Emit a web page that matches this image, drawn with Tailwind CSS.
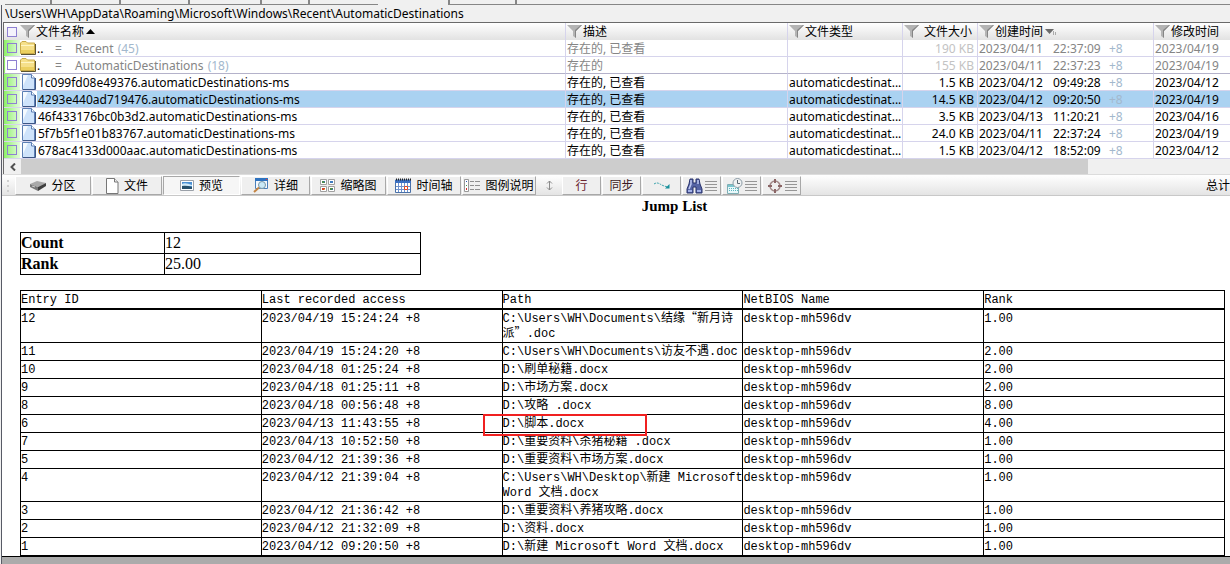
<!DOCTYPE html>
<html lang="zh-CN">
<head>
<meta charset="utf-8">
<title>AutomaticDestinations</title>
<script src="https://cdn.jsdelivr.net/npm/@tailwindcss/browser@4"></script>
</head>
<body class="min-h-screen flex flex-col overflow-hidden bg-[#f0f0f0] text-black text-[12px] font-['Noto_Sans','Noto_Sans_CJK_SC',sans-serif]">
<svg class="hidden">
  <symbol id="funnel" viewBox="0 0 15 13"><path d="M0 0h15L9 6v7l-3-2V6z" fill="#b4b4b4"/><path d="M8 5l6-5h1L9 6v7l-1-1z" fill="#858585"/></symbol>
  <symbol id="folder" viewBox="0 0 16 14"><path d="M.5 12.500V2L2 .5h4L7.500 2H14.500v10.500z" fill="#f6e08a" stroke="#c9aa48"/><path d="M1 4.500h13" stroke="#fff6c4"/><path d="M1 9h13v3H1z" fill="#ecd060"/><path d="M1 13.500h14.500V3" stroke="#5c5433" fill="none"/></symbol>
  <symbol id="doc" viewBox="0 0 14 16"><path d="M.5.5h9l3 3.500v11.500H.5z" fill="#cfe3fb" stroke="#5d7fb5"/><path d="M1 1h5L1 12z" fill="#f5faff"/><path d="M9.500.5V4h3" fill="#fff" stroke="#5d7fb5"/><path d="M13.500 4v11.500H1" stroke="#3d5584" fill="none"/></symbol>
</svg>

<nav class="flex h-[5px] shrink-0 pl-[5px]">
  <div class="w-[47px] border-r-2 border-b border-[#868686]"></div>
  <div class="w-[69px] border-r-2 border-b border-[#868686]"></div>
  <div class="w-[69px] border-r-2 border-b border-[#868686]"></div>
  <div class="w-[72px] border-r-2 border-b border-[#868686]"></div>
  <div class="w-[48px] border-r-2 border-b border-[#868686]"></div>
  <div class="w-[68px] border-b border-[#868686]"></div>
  <div class="w-[72px] border-r-2 border-[#868686]"></div>
  <div class="w-[67px] border-r-2 border-b border-[#868686]"></div>
  <div class="flex-1 border-b border-[#868686]"></div>
</nav>

<main class="ml-px border-l border-[#585b66]">
  <div class="h-[17px] pl-[3px] leading-[18px] text-[12px] whitespace-nowrap">\Users\WH\AppData\Roaming\Microsoft\Windows\Recent\AutomaticDestinations</div>

  <section class="ml-px border-l border-t border-[#6a6a6a] overflow-hidden">
    <table class="w-full table-fixed border-separate border-spacing-0 bg-white whitespace-nowrap leading-4 [&_td]:h-[17px] [&_td]:p-0 [&_td]:pt-[2px] [&_td]:leading-[14px] [&_td:first-child]:pt-0 [&_td:nth-child(2)]:pt-0 [&_td:nth-child(2)_div>span]:pt-[2px] [&_td]:overflow-hidden [&_td]:border-b [&_td]:border-[#d6d4ec] [&_td+td+td]:border-l [&_td+td+td]:pl-px [&_th]:h-[17px] [&_th]:p-0 [&_th]:font-normal [&_th]:text-left [&_th]:overflow-hidden">
      <colgroup><col class="w-[16px]"><col class="w-[545px]"><col class="w-[222px]"><col class="w-[115px]"><col class="w-[75px]"><col class="w-[176px]"><col></colgroup>
      <thead class="bg-linear-to-b from-white to-[#e2e2e2] [&_th+th+th]:border-l [&_th+th+th]:border-[#d6d4ec]">
        <tr>
          <th><input type="checkbox" aria-label="全选" class="block ml-[3px] appearance-none size-[10px] border border-[#8f80d2] bg-[#f4f2fc]"></th>
          <th><div class="flex items-center"><svg class="w-[15px] h-[13px] mr-px"><use href="#funnel"/></svg>文件名称<svg class="ml-[2px] w-[9px] h-[5px]" viewBox="0 0 9 5"><path d="M4.500 0L9 5H0z"/></svg></div></th>
          <th><div class="flex items-center gap-px pl-px"><svg class="w-[15px] h-[13px]"><use href="#funnel"/></svg>描述</div></th>
          <th><div class="flex items-center gap-px pl-px"><svg class="w-[15px] h-[13px]"><use href="#funnel"/></svg>文件类型</div></th>
          <th><div class="flex items-center justify-between pl-px pr-[5px]"><svg class="w-[15px] h-[13px]"><use href="#funnel"/></svg>文件大小</div></th>
          <th><div class="flex items-center gap-px pl-px"><svg class="w-[15px] h-[13px]"><use href="#funnel"/></svg>创建时间<svg class="ml-px w-[11px] h-[7px]" viewBox="0 0 11 7"><path d="M0 1h9L4.500 6z" fill="#6b6b6b"/><path d="M8.500 3v4M10.500 4v3" stroke="#aaa"/></svg></div></th>
          <th><div class="flex items-center gap-px pl-px"><svg class="w-[15px] h-[13px]"><use href="#funnel"/></svg>修改时间</div></th>
        </tr>
      </thead>
      <tbody>
        <tr class="text-[#858585]">
          <td class="bg-linear-to-r from-[#8cf066] to-[#e4fbdc]"><input type="checkbox" aria-label="Recent" class="block ml-[3px] appearance-none size-[10px] border border-[#8f80d2]"></td>
          <td><div class="flex items-center"><svg class="w-4 h-[14px] mr-px"><use href="#folder"/></svg><span class="w-[18px] text-black">..</span><span class="w-5">=</span><span>Recent <span class="ml-px text-[#a3b8cd]">(45)</span></span></div></td>
          <td>存在的, 已查看</td><td></td>
          <td class="text-right pr-[3px]! text-[#c3c3c3]">190 KB</td>
          <td><div class="flex"><span class="w-[74px]">2023/04/11</span><span class="w-14">22:37:09</span><span class="text-[#a3b8cd]">+8</span></div></td><td>2023/04/19</td>
        </tr>
        <tr class="text-[#858585] [&>td]:border-b-[#b4b2ca]!">
          <td class="bg-linear-to-r from-[#8cf066] from-5% to-white to-10%"><input type="checkbox" aria-label="AutomaticDestinations" class="block ml-[3px] appearance-none size-[10px] border border-[#8f80d2]"></td>
          <td><div class="flex items-center"><svg class="w-4 h-[14px] mr-px"><use href="#folder"/></svg><span class="w-[18px] text-black">.</span><span class="w-5">=</span><span>AutomaticDestinations <span class="ml-px text-[#a3b8cd]">(18)</span></span></div></td>
          <td>存在的</td><td></td>
          <td class="text-right pr-[3px]! text-[#c3c3c3]">155 KB</td>
          <td><div class="flex"><span class="w-[74px]">2023/04/11</span><span class="w-14">22:37:23</span><span class="text-[#a3b8cd]">+8</span></div></td><td>2023/04/19</td>
        </tr>
        <tr>
          <td class="bg-linear-to-r from-[#8cf066] to-[#e4fbdc]"><input type="checkbox" aria-label="1c099fd08e49376" class="block ml-[3px] appearance-none size-[10px] border border-[#8f80d2]"></td>
          <td><div class="flex items-center"><svg class="w-[14px] h-4 ml-[2px] mr-px"><use href="#doc"/></svg><span class="pl-px">1c099fd08e49376.automaticDestinations-ms</span></div></td>
          <td>存在的, 已查看</td><td>automaticdestinat...</td>
          <td class="text-right pr-[3px]!">1.5 KB</td>
          <td><div class="flex"><span class="w-[74px]">2023/04/12</span><span class="w-14">09:49:28</span><span class="text-[#a3b8cd]">+8</span></div></td><td>2023/04/12</td>
        </tr>
        <tr class="[&>td+td+td]:bg-[#aad2f1]">
          <td class="bg-linear-to-r from-[#8cf066] to-[#e4fbdc]"><input type="checkbox" aria-label="4293e440ad719476" class="block ml-[3px] appearance-none size-[10px] border border-[#8f80d2]"></td>
          <td><div class="flex items-center"><svg class="w-[14px] h-4 ml-[2px] mr-px"><use href="#doc"/></svg><span class="flex-1 bg-[#aad2f1] pl-px">4293e440ad719476.automaticDestinations-ms</span></div></td>
          <td>存在的, 已查看</td><td>automaticdestinat...</td>
          <td class="text-right pr-[3px]!">14.5 KB</td>
          <td><div class="flex"><span class="w-[74px]">2023/04/12</span><span class="w-14">09:20:50</span><span class="text-[#a3b8cd]">+8</span></div></td><td>2023/04/19</td>
        </tr>
        <tr>
          <td class="bg-linear-to-r from-[#8cf066] to-[#e4fbdc]"><input type="checkbox" aria-label="46f433176bc0b3d2" class="block ml-[3px] appearance-none size-[10px] border border-[#8f80d2]"></td>
          <td><div class="flex items-center"><svg class="w-[14px] h-4 ml-[2px] mr-px"><use href="#doc"/></svg><span class="pl-px">46f433176bc0b3d2.automaticDestinations-ms</span></div></td>
          <td>存在的, 已查看</td><td>automaticdestinat...</td>
          <td class="text-right pr-[3px]!">3.5 KB</td>
          <td><div class="flex"><span class="w-[74px]">2023/04/13</span><span class="w-14">11:20:21</span><span class="text-[#a3b8cd]">+8</span></div></td><td>2023/04/16</td>
        </tr>
        <tr>
          <td class="bg-linear-to-r from-[#8cf066] to-[#e4fbdc]"><input type="checkbox" aria-label="5f7b5f1e01b83767" class="block ml-[3px] appearance-none size-[10px] border border-[#8f80d2]"></td>
          <td><div class="flex items-center"><svg class="w-[14px] h-4 ml-[2px] mr-px"><use href="#doc"/></svg><span class="pl-px">5f7b5f1e01b83767.automaticDestinations-ms</span></div></td>
          <td>存在的, 已查看</td><td>automaticdestinat...</td>
          <td class="text-right pr-[3px]!">24.0 KB</td>
          <td><div class="flex"><span class="w-[74px]">2023/04/11</span><span class="w-14">22:37:24</span><span class="text-[#a3b8cd]">+8</span></div></td><td>2023/04/19</td>
        </tr>
        <tr>
          <td class="bg-linear-to-r from-[#8cf066] to-[#e4fbdc]"><input type="checkbox" aria-label="678ac4133d000aac" class="block ml-[3px] appearance-none size-[10px] border border-[#8f80d2]"></td>
          <td><div class="flex items-center"><svg class="w-[14px] h-4 ml-[2px] mr-px"><use href="#doc"/></svg><span class="pl-px">678ac4133d000aac.automaticDestinations-ms</span></div></td>
          <td>存在的, 已查看</td><td>automaticdestinat...</td>
          <td class="text-right pr-[3px]!">1.5 KB</td>
          <td><div class="flex"><span class="w-[74px]">2023/04/12</span><span class="w-14">18:52:09</span><span class="text-[#a3b8cd]">+8</span></div></td><td>2023/04/12</td>
        </tr>
      </tbody>
    </table>
    <div class="flex h-[15px]">
      <button aria-label="向左滚动" class="w-[17px] shrink-0 grid place-items-center"><svg class="w-[6px] h-[8px]" viewBox="0 0 6 8"><path d="M5 .5L1.500 4 5 7.500" fill="none" stroke="#505050" stroke-width="2"/></svg></button>
      <div class="w-[87%] bg-[#cdcdcd]"></div>
    </div>
  </section>

  <div role="toolbar" class="flex h-[22px] items-stretch gap-px border-t border-b border-t-[#dcdcdc] border-b-[#c8c8c8] bg-linear-to-b from-white to-[#e4e4e4] pt-px leading-4 whitespace-nowrap [&>button]:flex [&>button]:items-center [&>button]:justify-center [&>button]:gap-[5px] [&>button]:bg-[#efefef] [&>button]:border [&>button]:border-t-white [&>button]:border-l-white [&>button]:border-r-[#a8a8a8] [&>button]:border-b-[#a8a8a8]">
    <div class="w-3 flex flex-col items-center justify-center gap-[3px]"><i class="size-[2px] bg-[#d0d0d0]"></i><i class="size-[2px] bg-[#d0d0d0]"></i><i class="size-[2px] bg-[#d0d0d0]"></i></div>
    <button class="w-[76px]"><svg class="w-4 h-[10px]" viewBox="0 0 16 10"><path d="M0 3l7-3 9 2-8 4z" fill="#a9a9a9"/><path d="M0 3l8 3v4L0 6z" fill="#777"/><path d="M8 6l8-4v3l-8 5z" fill="#3e3e3e"/><path d="M2 5l3 1" stroke="#ccc"/></svg>分区</button>
    <button class="w-[70px]"><svg class="w-[13px] h-4" viewBox="0 0 13 16"><path d="M.5.5h8l3.500 3.500v11.500H.5z" fill="#fff" stroke="#777"/><path d="M8.500.5V4H12" fill="#eee" stroke="#777"/></svg>文件</button>
    <button class="w-[77px] border-t-[#a8a8a8]! border-l-[#a8a8a8]! border-r-white! border-b-white! bg-[#f6f6f6]!"><svg class="w-[14px] h-[11px]" viewBox="0 0 14 11"><path d="M.5.5h13v10H.5z" fill="#fff" stroke="#9aa0a8"/><path d="M2 2h10v7H2z" fill="#4b91d4"/><path d="M2 4q3-2 10 1v1H2z" fill="#cfe9f8"/><path d="M2 6q4-1 10 1v2H2z" fill="#27506b"/></svg>预览</button>
    <button class="w-[69px]"><svg class="w-4 h-[15px]" viewBox="0 0 16 15"><path d="M2.500.5h12v10h-12z" fill="#f4f8fd" stroke="#4a80ba"/><path d="M2 0h13v3H2z" fill="#2e73c0"/><path d="M13 1h1v1h-1z" fill="#e33"/><circle cx="9" cy="7" r="3.500" fill="#c9e9f7" stroke="#7b97a5"/><path d="M6 9.500L1 14" stroke="#c48443" stroke-width="2"/></svg>详细</button>
    <button class="w-[75px]"><svg class="w-[15px] h-[13px]" viewBox="0 0 15 13"><g fill="#fff" stroke="#a0a0a0"><path d="M.5.5h6v5h-6zM8.500.5h6v5h-6zM.5 7.500h6v5h-6zM8.500 7.500h6v5h-6z"/></g><path d="M2 2h3v2H2zM10 9h3v2h-3z" fill="#4c8a50"/><path d="M10 2h3v2h-3z" fill="#3e7cc0"/><path d="M2 9h3v2H2z" fill="#d3452c"/><path d="M4 2h1v1H4zM12 10h1v1h-1z" fill="#3770c4"/><path d="M4 10h1v1H4z" fill="#e9b23a"/></svg>缩略图</button>
    <button class="w-[74px]"><svg class="w-4 h-[15px]" viewBox="0 0 16 15"><path d="M.5 2h15v12.500H.5z" fill="#fff" stroke="#4971a8"/><path d="M0 2h16v3H0z" fill="#3a6fc2"/><path d="M1 1.500h15" stroke="#222" stroke-width="2" stroke-dasharray="1 1"/><path d="M3.500 5v9M6.500 5v9M9.500 5v9M12.500 5v9M1 8.500h14M1 11.500h14" stroke="#6e92cf"/><path d="M9.500 8.500h3v3h-3z" fill="#fff" stroke="#e2461f"/></svg>时间轴</button>
    <button class="w-[74px]"><svg class="w-4 h-[13px]" viewBox="0 0 16 13"><path d="M.5.5h4v12h-4z" fill="#fff" stroke="#999"/><path d="M2 2h1v1H2z" fill="#2c55b0"/><path d="M2 6h1v1H2z" fill="#3c9548"/><path d="M2 9h1v2H2z" fill="#d12c2c"/><path d="M6 2.500h4M11 2.500h5M6 6.500h4M11 6.500h5M6 10.500h4M11 10.500h5" stroke="#8e8e8e"/></svg>图例说明</button>
    <button aria-label="上下" class="w-6 bg-transparent! border-transparent!"><svg class="w-[7px] h-[11px]" viewBox="0 0 7 11"><path d="M3.500 1v9M1 3.500L3.500 1 6 3.500M1 7.500L3.500 10 6 7.500" fill="none" stroke="#8b8b8b"/></svg></button>
    <button class="w-[39px] text-[#6b2530]">行</button>
    <button class="w-[39px] text-[#3a1822]">同步</button>
    <button aria-label="跳转" class="w-[39px]"><svg class="w-4 h-[7px]" viewBox="0 0 16 7"><path d="M0 2q3-2 6 0t8 3" fill="none" stroke="#35a0aa" stroke-dasharray="2 1"/><path d="M15.500 2v4.500H11z" fill="#168f9b"/></svg></button>
    <button aria-label="搜索" class="w-[39px] gap-[2px]!"><svg class="w-[17px] h-4" viewBox="0 0 17 16"><path d="M4 1h3v4h3V1h3l1 5 2 5v4h-6V9H7v6H1v-4l2-5z" fill="#5664a4" stroke="#29336d"/><path d="M5 2v4L3 11M12 2v4" stroke="#bec8f2" fill="none" stroke-width="1.500"/><path d="M2 12h4v2H2zM11 12h4v2h-4z" fill="#a4b2e8"/></svg><svg class="w-3 h-3" viewBox="0 0 12 12"><path d="M0 1.500h12M0 4.500h12M0 7.500h12M0 10.500h12" stroke="#969696"/></svg></button>
    <button aria-label="时间筛选" class="w-[39px] gap-[2px]!"><svg class="w-4 h-4" viewBox="0 0 16 16"><path d="M.5 6.500h11v9H.5z" fill="#e8f8fa" stroke="#7eaeb4"/><path d="M1 7h10v2H1z" fill="#7cc5cf"/><path d="M2 10.500h9M2 12.500h9" stroke="#5bb5c0" stroke-dasharray="1 1"/><circle cx="10.500" cy="5" r="4.500" fill="#f0f2f3" stroke="#8b9ba5"/><path d="M10.500 2v3.500H13" stroke="#5a6872" fill="none"/></svg><svg class="w-3 h-3" viewBox="0 0 12 12"><path d="M0 1.500h12M0 4.500h12M0 7.500h12M0 10.500h12" stroke="#969696"/></svg></button>
    <button aria-label="定位" class="w-[39px] gap-[2px]!"><svg class="w-4 h-4" viewBox="0 0 16 16"><circle cx="8" cy="8" r="5" fill="none" stroke="#a08888" stroke-width="1.500"/><path d="M8 1v4M8 11v4M1 8h4M11 8h4" stroke="#8b6666" stroke-width="2"/></svg><svg class="w-3 h-3" viewBox="0 0 12 12"><path d="M0 1.500h12M0 4.500h12M0 7.500h12M0 10.500h12" stroke="#969696"/></svg></button>
    <span class="ml-auto self-center">总计</span>
  </div>

  <article class="bg-white pr-[5px] pl-[18px] border-b border-black">
    <h1 class="pl-[104px] pt-px text-center font-['Liberation_Serif',serif] font-bold text-[15px] leading-[18px]">Jump List</h1>
    <table class="mt-[17px] w-[401px] table-fixed border-collapse font-['Liberation_Serif',serif] text-[16px] leading-[20px] [&_th]:border [&_td]:border [&_th]:border-black [&_td]:border-black [&_th]:p-0 [&_td]:p-0 [&_th]:text-left">
      <colgroup><col class="w-[144px]"><col></colgroup>
      <tr><th>Count</th><td>12</td></tr>
      <tr><th>Rank</th><td>25.00</td></tr>
    </table>
    <table class="mt-[15px] w-full table-fixed border-collapse whitespace-nowrap align-top font-['Liberation_Mono','Noto_Sans_CJK_SC',monospace] text-[12px] leading-[15px] [&_th]:border [&_th]:border-b-2 [&_td]:border [&_th]:border-black [&_td]:border-black [&_th]:p-0 [&_th]:pt-[2px] [&_td]:p-0 [&_td]:pt-[2px] [&_td]:align-top [&_th]:text-left [&_th]:font-normal">
      <thead><tr><th>Entry ID</th><th>Last recorded access</th><th>Path</th><th>NetBIOS Name</th><th>Rank</th></tr></thead>
      <tbody>
        <tr><td>12</td><td>2023/04/19 15:24:24 +8</td><td>C:\Users\WH\Documents\结缘<span class="font-['Noto_Sans_CJK_SC',sans-serif] leading-[0px]">“</span>新月诗<br>派<span class="font-['Noto_Sans_CJK_SC',sans-serif] leading-[0px]">”</span>.doc</td><td>desktop-mh596dv</td><td>1.00</td></tr>
        <tr><td>11</td><td>2023/04/19 15:24:20 +8</td><td>C:\Users\WH\Documents\访友不遇.doc</td><td>desktop-mh596dv</td><td>2.00</td></tr>
        <tr><td>10</td><td>2023/04/18 01:25:24 +8</td><td>D:\刷单秘籍.docx</td><td>desktop-mh596dv</td><td>2.00</td></tr>
        <tr><td>9</td><td>2023/04/18 01:25:11 +8</td><td>D:\市场方案.docx</td><td>desktop-mh596dv</td><td>2.00</td></tr>
        <tr><td>8</td><td>2023/04/18 00:56:48 +8</td><td>D:\攻略 .docx</td><td>desktop-mh596dv</td><td>8.00</td></tr>
        <tr><td>6</td><td>2023/04/13 11:43:55 +8</td><td class="relative">D:\脚本.docx<div class="absolute -left-[20px] -top-px w-[164px] h-[22px] border-2 border-[#f02020]"></div></td><td>desktop-mh596dv</td><td>4.00</td></tr>
        <tr><td>7</td><td>2023/04/13 10:52:50 +8</td><td>D:\重要资料\杀猪秘籍 .docx</td><td>desktop-mh596dv</td><td>1.00</td></tr>
        <tr><td>5</td><td>2023/04/12 21:39:36 +8</td><td>D:\重要资料\市场方案.docx</td><td>desktop-mh596dv</td><td>1.00</td></tr>
        <tr><td>4</td><td>2023/04/12 21:39:04 +8</td><td>C:\Users\WH\Desktop\新建 Microsoft<br>Word 文档.docx</td><td>desktop-mh596dv</td><td>1.00</td></tr>
        <tr><td>3</td><td>2023/04/12 21:36:42 +8</td><td>D:\重要资料\养猪攻略.docx</td><td>desktop-mh596dv</td><td>1.00</td></tr>
        <tr><td>2</td><td>2023/04/12 21:32:09 +8</td><td>D:\资料.docx</td><td>desktop-mh596dv</td><td>1.00</td></tr>
        <tr><td>1</td><td>2023/04/12 09:20:50 +8</td><td>D:\新建 Microsoft Word 文档.docx</td><td>desktop-mh596dv</td><td>1.00</td></tr>
      </tbody>
    </table>
  </article>
</main>
<footer class="flex-1 ml-px border-l border-[#585b66] bg-[#ababab]"></footer>
</body>
</html>
